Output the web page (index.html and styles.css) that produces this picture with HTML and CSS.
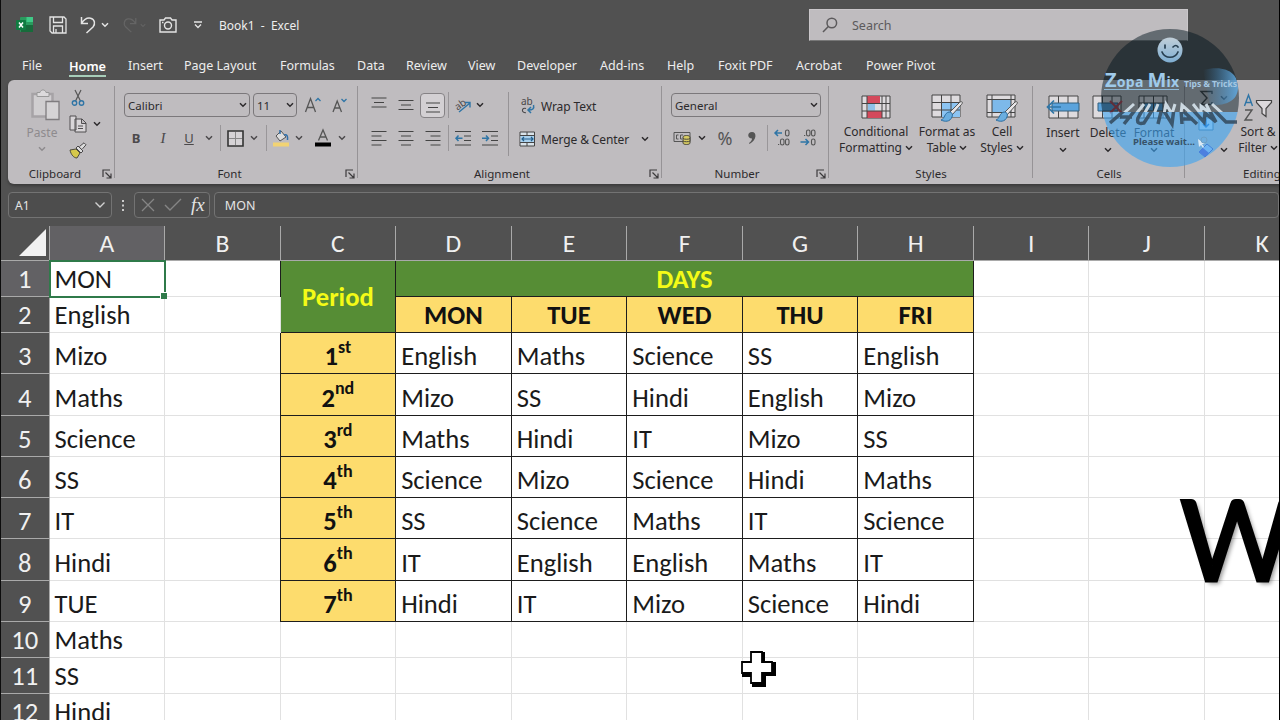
FILE: index.html
```html
<!DOCTYPE html>
<html lang="en">
<head>
<meta charset="utf-8">
<title>Book1 - Excel</title>
<link rel="stylesheet" href="styles.css">
</head>
<body>
<svg class="defs" width="0" height="0">
  <symbol id="chev" viewBox="0 0 8 6"><path d="M1 1.300 4 4.200 7 1.300" fill="none" stroke="currentColor" stroke-width="1.500"/></symbol>
  <symbol id="launch" viewBox="0 0 10 10"><path d="M1 8V1h7M3.500 3.500 8.500 8.500M9 4.500V9H4.500" fill="none" stroke="#3c3a3c" stroke-width="1.200"/></symbol>
</svg>
<div class="app">
  <header class="titlebar">
    <svg class="logo" width="18" height="18" viewBox="0 0 18 18"><rect x="4" y="1" width="13" height="15" rx="1" fill="#2a9b5e"/><path d="M10.500 1H17v5h-6.500z" fill="#3fca87"/><path d="M4 9h13v7H5z" fill="#176b3b"/><rect x="0" y="4" width="10" height="10" rx="1" fill="#107c41"/><path d="m3 6.500 4 5M7 6.500l-4 5" stroke="#fff" stroke-width="1.500"/></svg>
    <svg class="save" width="18" height="18" viewBox="0 0 18 18" fill="none" stroke="#e4e4e4" stroke-width="1.300"><path d="M1 1h14l2 2v14H3l-2-2zM4.500 1v5.500h9V1M4.500 17v-7h9v7M7 13v4"/></svg>
    <svg class="undo" width="16" height="18" viewBox="0 0 16 18" fill="none" stroke="#e4e4e4" stroke-width="1.500"><path d="M1.500 1v6.500H8M1.500 7.500C4 3.500 7 1.500 10.500 2.200c4.500 1 5 6 2.500 8.800L6.500 17"/></svg>
    <svg class="light" width="8" height="6"><use href="#chev"/></svg>
    <svg class="redo" width="16" height="16" viewBox="0 0 16 18" fill="none" stroke="#656565" stroke-width="1.400"><path d="M14.500 1v6.500H8M14.500 7.500C12 3.500 9 1.500 5.500 2.200c-4.500 1-5 6-2.500 8.800L9.500 17"/></svg>
    <svg class="dim" width="6" height="5"><use href="#chev"/></svg>
    <svg class="camera" width="18" height="16" viewBox="0 0 18 16" fill="none" stroke="#e4e4e4" stroke-width="1.400"><path d="M1 3h4l1.500-2h5L13 3h4v12H1z"/><circle cx="9" cy="8.500" r="3.500"/><path d="M3 5.500h1.500"/></svg>
    <svg class="more" width="8" height="8" viewBox="0 0 8 8" fill="none" stroke="#e4e4e4" stroke-width="1.300"><path d="M0 1h8M1 3.500 4 6.500 7 3.500"/></svg>
    <span class="doc">Book1&nbsp; -&nbsp; Excel</span>
    <div class="search"><svg width="16" height="16" viewBox="0 0 16 16" fill="none" stroke="#5c5a5c" stroke-width="1.500"><circle cx="9.800" cy="6" r="4.800"/><path d="M6.300 9.500 1 15"/></svg><span>Search</span></div>
  </header>
  <nav class="tabs">
    <a>File</a><a class="on">Home</a><a>Insert</a><a>Page Layout</a><a>Formulas</a><a>Data</a><a>Review</a><a>View</a><a>Developer</a><a>Add-ins</a><a>Help</a><a>Foxit PDF</a><a>Acrobat</a><a>Power Pivot</a>
  </nav>
  <section class="ribbon">
    <div class="group clipboard">
      <div class="body">
        <div class="paste">
          <svg width="32" height="34" viewBox="0 0 32 34"><path d="M3.500 6h20v22.500h-20z" fill="#d0ced0" stroke="#a6a3a6" stroke-width="2.500"/><path d="M8 8.500V4.500h3c1-3.500 5-3.500 6 0h3v4z" fill="#dcdadc" stroke="#999"/><path d="M17 13.500h13v18H17z" fill="#d5d3d5" stroke="#7f7c7f" stroke-width="1.300"/></svg>
          <span>Paste</span><svg width="8" height="6"><use href="#chev"/></svg>
        </div>
        <div class="clips">
          <svg width="14" height="18" viewBox="0 0 14 18" fill="none"><path d="m4 1 5.500 11M10 1 4.500 12" stroke="#555" stroke-width="1.200"/><circle cx="3.500" cy="14" r="2.200" stroke="#2f75a6" stroke-width="1.400"/><circle cx="10.500" cy="14" r="2.200" stroke="#2f75a6" stroke-width="1.400"/></svg><i></i>
          <svg width="18" height="18" viewBox="0 0 18 18" fill="#d8d5d8" stroke="#504e50"><path d="M1 1h6v14H1zM6 4h7l4 4v9H6zM12.500 4v4.500H17M9 11h5M9 13.500h5"/></svg><svg width="8" height="6"><use href="#chev"/></svg>
          <svg width="18" height="17" viewBox="0 0 18 17"><path d="m1 8 6-1 4 4-3 5c-3 0-6-3-7-8z" fill="#d6c84a" stroke="#4c4b3d"/><path d="m7 6 2-2 5 5-2 2zM10.500 4.500 15 .800l2 2-3.500 4" fill="#ddd" stroke="#4b494b"/></svg><i></i>
        </div>
      </div>
      <footer>Clipboard<svg class="launch" width="10" height="10"><use href="#launch"/></svg></footer>
    </div>
    <div class="group font">
      <div class="body">
        <div class="r1">
          <div class="combo">Calibri<svg width="8" height="6"><use href="#chev"/></svg></div>
          <div class="combo">11<svg width="8" height="6"><use href="#chev"/></svg></div>
          <svg width="16" height="16" viewBox="0 0 16 16" fill="none"><path d="M.500 15 5.500 1.500l5 13.500M2.300 10.500h6.500" stroke="#555" stroke-width="1.300"/><path d="m10.500 4 2.500-2.500L15.500 4" stroke="#2f75a6" stroke-width="1.300"/></svg>
          <svg width="16" height="16" viewBox="0 0 16 16" fill="none"><path d="M1 15 5.200 4l4.300 11M2.500 11H8" stroke="#555" stroke-width="1.300"/><path d="m9.500 2 2.500 2.500L14.500 2" stroke="#2f75a6" stroke-width="1.300"/></svg>
        </div>
        <div class="r2">
          <b>B</b><em>I</em><u>U</u><svg width="8" height="6"><use href="#chev"/></svg><s></s>
          <svg width="17" height="17" viewBox="0 0 17 17"><path d="M1 1h15v15H1z" fill="#d6d3d6" stroke="#333" stroke-width="1.600"/><path d="M8.500 2v13M2 8.500h13" stroke="#888"/></svg>
          <svg width="8" height="6"><use href="#chev"/></svg><s></s>
          <svg width="18" height="18" viewBox="0 0 18 18"><path d="m4 7 5-5 5 6-6 4z" fill="#ddd" stroke="#555"/><path d="M8 5V1M12 6c3-1 4 1 3.500 5" fill="none" stroke="#2f6faa" stroke-width="1.500"/><path d="M1 13.500h16v4H1z" fill="#f2d373"/></svg>
          <svg width="8" height="6"><use href="#chev"/></svg>
          <svg width="18" height="18" viewBox="0 0 18 18"><path d="M4.500 11.500 9 1l4.500 10.500M6 8h6" fill="none" stroke="#555" stroke-width="1.300"/><path d="M1 13.500h16v4H1z"/></svg>
          <svg width="8" height="6"><use href="#chev"/></svg>
        </div>
      </div>
      <footer>Font<svg class="launch" width="10" height="10"><use href="#launch"/></svg></footer>
    </div>
    <div class="group align">
      <div class="body">
        <div class="aligns">
          <div class="r1">
            <svg width="16" height="16" viewBox="0 0 16 16" stroke="#444" stroke-width="1.200"><path d="M.500 1h15M3 5.500h10M.500 10h15"/></svg>
            <svg width="16" height="16" viewBox="0 0 16 16" stroke="#444" stroke-width="1.200"><path d="M.500 3.500h15M3 8h10M.500 12.500h15"/></svg>
            <span class="pressed"><svg width="16" height="16" viewBox="0 0 16 16" stroke="#444" stroke-width="1.200"><path d="M1 6h14M3 10.500h10M1 15h14"/></svg></span><s></s>
            <svg width="18" height="18" viewBox="0 0 18 18"><text x="0" y="12" class="ab" transform="rotate(-35 6 8)">ab</text><path d="m5 16 11-9M11 6.500h5v5" fill="none" stroke="#2f75a6" stroke-width="1.400"/></svg>
            <svg width="8" height="6"><use href="#chev"/></svg>
          </div>
          <div class="r2">
            <svg width="16" height="16" viewBox="0 0 16 16" stroke="#444" stroke-width="1.200"><path d="M.500 1.500h15M.500 6h10M.500 10.500h15M.500 15h10"/></svg>
            <svg width="16" height="16" viewBox="0 0 16 16" stroke="#444" stroke-width="1.200"><path d="M.500 1.500h15M3 6h10M.500 10.500h15M3 15h10"/></svg>
            <svg width="16" height="16" viewBox="0 0 16 16" stroke="#444" stroke-width="1.200"><path d="M.500 1.500h15M5.500 6h10M.500 10.500h15M5.500 15h10"/></svg><s></s>
            <svg width="16" height="16" viewBox="0 0 16 16" fill="none" stroke="#444" stroke-width="1.200"><path d="M0 1.500h16M9 6h7M9 10.500h7M0 15h16"/><path d="M7.500 8.200H1M3.500 5.500 1 8.200 3.500 11" stroke="#2f75a6" stroke-width="1.500"/></svg>
            <svg width="16" height="16" viewBox="0 0 16 16" fill="none" stroke="#444" stroke-width="1.200"><path d="M0 1.500h16M9 6h7M9 10.500h7M0 15h16"/><path d="M0 8.200h6.500M4 5.500l2.500 2.700L4 11" stroke="#2f75a6" stroke-width="1.500"/></svg>
          </div>
        </div>
        <div class="wraps">
          <div><svg width="17" height="18" viewBox="0 0 17 18"><text x="2" y="8" class="ab">ab</text><path d="M7 11.500c-4-1.500-5.500 4.500 0 4.200" fill="none" stroke="#4a484a" stroke-width="1.100"/><path d="M14.500 8c1 4-1 5-5 5M12 10l-3 3 3 3" fill="none" stroke="#2f75a6" stroke-width="1.500"/></svg><span class="wt">Wrap Text</span></div>
          <div><svg width="17" height="16" viewBox="0 0 17 16"><path d="M1 1h14.500v14H1z" fill="#d9e3ea" stroke="#444"/><path d="M1 4.500h14.500M1 11.500h14.500M8 1v3.500M8 11.500V15" stroke="#444"/><path d="M1.500 5h13.500v6H1.500z" fill="#a9d1ee"/><path d="M3 8h11M5 6 3 8l2 2M12 6l2 2-2 2" fill="none" stroke="#235f8c" stroke-width="1.200"/></svg><span class="mc">Merge &amp; Center</span><svg width="8" height="6"><use href="#chev"/></svg></div>
        </div>
      </div>
      <footer>Alignment<svg class="launch" width="10" height="10"><use href="#launch"/></svg></footer>
    </div>
    <div class="group number">
      <div class="body">
        <div class="combo">General<svg width="8" height="6"><use href="#chev"/></svg></div>
        <div class="r2">
          <svg width="18" height="16" viewBox="0 0 18 16" fill="none" stroke="#555"><path d="M1 2.500h16v9H1z"/><path d="M5.500 5H3.500v4h2M10 5H7.500v4H9"/><path d="M10 7c0-2 7-2 7 0v6c0 2-7 2-7 0z" fill="#d8cc63" stroke="#49473c"/><path d="M10 8.500c1 1 6 1 7 0M10 11c1 1 6 1 7 0" stroke="#49473c"/></svg>
          <svg width="8" height="6"><use href="#chev"/></svg>
          <span class="pct">%</span>
          <svg width="10" height="14" viewBox="0 0 10 14"><path d="M5 1c5 0 5 8-2.500 12l-.5-1c2-1.500 3-3 3-4.500C0 7.500 0 1 5 1z" fill="#555"/></svg><s></s>
          <svg width="18" height="18" viewBox="0 0 18 18" fill="none" stroke="#555" stroke-width="1.100"><rect x="12.500" y="1" width="3.500" height="6" rx="1.700"/><rect x="7.500" y="10" width="3.500" height="6" rx="1.700"/><rect x="12.500" y="10" width="3.500" height="6" rx="1.700"/><path d="M5 15.500h1.200"/><path d="M9 4H2M5 1 2 4l3 3" stroke="#2f75a6" stroke-width="1.500"/></svg>
          <svg width="18" height="18" viewBox="0 0 18 18" fill="none" stroke="#555" stroke-width="1.100"><rect x="7.500" y="1" width="3.500" height="6" rx="1.700"/><rect x="12.500" y="1" width="3.500" height="6" rx="1.700"/><rect x="12.500" y="10" width="3.500" height="6" rx="1.700"/><path d="M5 6.500h1.200"/><path d="M1.500 13H9M6.500 10l3 3-3 3" stroke="#2f75a6" stroke-width="1.500"/></svg>
        </div>
      </div>
      <footer>Number<svg class="launch" width="10" height="10"><use href="#launch"/></svg></footer>
    </div>
    <div class="group styles">
      <div class="body">
        <div class="big"><svg width="30" height="26" viewBox="0 0 30 26"><path d="M1 1h28v22H1z" fill="#dedbde" stroke="#444"/><path d="M6 1h13v7H6zM6 16h15v7H6z" fill="#d4495b"/><path d="M7 8.500h7v7H7z" fill="#8fc0e8"/><path d="M6 1v22M21 1v22M25 1v22M1 8.500h28M1 16h28" fill="none" stroke="#444"/></svg><span>Conditional</span><span>Formatting <svg width="8" height="6"><use href="#chev"/></svg></span></div>
        <div class="big"><svg width="32" height="30" viewBox="0 0 32 30"><path d="M1 3h28v22H1z" fill="#dedbde" stroke="#444"/><path d="M10.500 10.500H29V25H10.500z" fill="#8cc4f2"/><path d="M10.500 3v22M20 3v22M1 10.500h28M1 18h28" stroke="#444"/><path d="M29 10c3-1 3 1 1 3l-9 10-3-2z" fill="#e7e5e7" stroke="#555"/><path d="M18 20c3 0 4 2 3 5-2 5-7 5-11 3 4-1 3-7 8-8z" fill="#6aaee0" stroke="#2c6d9f"/></svg><span>Format as</span><span>Table <svg width="8" height="6"><use href="#chev"/></svg></span></div>
        <div class="big"><svg width="32" height="30" viewBox="0 0 32 30"><path d="M1 3h28v22H1z" fill="#dedbde" stroke="#444"/><path d="M6 7.500h19v13H6z" fill="#7db9ea"/><path d="M6 3v22M25 3v22M1 7.500h28M1 20.500h28" stroke="#444"/><path d="M29 10c3-1 3 1 1 3l-9 10-3-2z" fill="#e7e5e7" stroke="#555"/><path d="M18 20c3 0 4 2 3 5-2 5-7 5-11 3 4-1 3-7 8-8z" fill="#6aaee0" stroke="#2c6d9f"/></svg><span>Cell</span><span>Styles <svg width="8" height="6"><use href="#chev"/></svg></span></div>
      </div>
      <footer>Styles</footer>
    </div>
    <div class="group cells">
      <div class="body">
        <div class="big"><svg width="34" height="26" viewBox="0 0 34 26"><path d="M3 1h29v22H3z" fill="#dedbde" stroke="#444"/><path d="M12.500 1v22M22 1v22" stroke="#444"/><path d="M6 8h27v8H6z" fill="#5ba3dc" stroke="#35617f"/><path d="M15 12H1.500M8 5.500 1.500 12 8 18.500" fill="none" stroke="#2f75a6" stroke-width="1.700"/></svg><span>Insert</span><svg width="8" height="6"><use href="#chev"/></svg></div>
        <div class="big"><svg width="32" height="26" viewBox="0 0 32 26"><path d="M1 1h28v22H1z" fill="#dedbde" stroke="#444"/><path d="M10.500 1v22M20 1v22" stroke="#444"/><path d="M6 8h20v8H6z" fill="#5ba3dc" stroke="#35617f"/><path d="m18 6 12 12M30 6 18 18" stroke="#b94752" stroke-width="2"/></svg><span>Delete</span><svg width="8" height="6"><use href="#chev"/></svg></div>
        <div class="big"><svg width="32" height="26" viewBox="0 0 32 26"><path d="M1 1h28v22H1z" fill="#dedbde" stroke="#444"/><path d="M6 8h19v8H6z" fill="#5ba3dc"/><path d="M6 1v22M25 1v22M15.500 1v22M1 8h28M1 16h28" stroke="#444"/></svg><span>Format</span><svg width="8" height="6"><use href="#chev"/></svg></div>
      </div>
      <footer>Cells</footer>
    </div>
    <div class="group editing">
      <div class="body">
        <div class="clips">
          <svg width="14" height="16" viewBox="0 0 14 16"><path d="M13 4V1.500H2L8 8l-6 6.500h11V12" fill="none" stroke="#444" stroke-width="1.400"/></svg><svg width="8" height="6"><use href="#chev"/></svg>
          <svg width="16" height="16" viewBox="0 0 16 16"><path d="M1 2h14v12H1z" fill="#c6dcf0" stroke="#4c7797"/><path d="M8 3v8M5 8l3 3 3-3" fill="none" stroke="#2f75c6" stroke-width="1.500"/></svg><i></i>
          <svg width="16" height="16" viewBox="0 0 16 16"><path d="m1 10 8-8 6 5-8 8z" fill="#b9cdf6" stroke="#534fae"/><path d="m1 10 4-4 6 5-4 4z" fill="#6a4cc4"/></svg><svg width="8" height="6"><use href="#chev"/></svg>
        </div>
        <div class="big"><svg width="30" height="28" viewBox="0 0 30 28" fill="none"><path d="M1.500 12 5.500 1l4 11M3 8.500h5.500" stroke="#2f75a6" stroke-width="1.400"/><path d="M2 16h7L2 26h7.500" stroke="#555" stroke-width="1.400"/><path d="M13.500 6.500h15v2l-5.500 6v8l-4-3v-5l-5.500-6z" fill="#dcd9dc" stroke="#444" stroke-width="1.200"/></svg><span>Sort &amp;</span><span>Filter <svg width="8" height="6"><use href="#chev"/></svg></span></div>
      </div>
      <footer>Editing</footer>
    </div>
  </section>
  <section class="formula">
    <div class="name">A1<svg width="12" height="8" viewBox="0 0 12 8"><path d="m1.500 1.500 4.500 4.500 4.500-4.500" fill="none" stroke="#d0d0d0" stroke-width="1.400"/></svg></div>
    <svg class="dots" width="4" height="14" viewBox="0 0 4 14" fill="#ccc"><path d="M1 1h2v2H1zM1 5.500h2v2H1zM1 10h2v2H1z"/></svg>
    <div class="fx"><svg width="14" height="14" viewBox="0 0 14 14"><path d="m1 1 12 12M13 1 1 13" stroke="#858585" stroke-width="1.300"/></svg><svg width="18" height="14" viewBox="0 0 18 14"><path d="m1 7 5 5L17 1" fill="none" stroke="#858585" stroke-width="1.400"/></svg><i>fx</i></div>
    <div class="input">MON</div>
  </section>
  <main class="sheet">
    <div class="h corner"><svg width="28" height="28"><path d="M27 0v27H0z" fill="#f1f1f1"/></svg></div><div class="h sel">A</div><div class="h">B</div><div class="h">C</div><div class="h">D</div><div class="h">E</div><div class="h">F</div><div class="h">G</div><div class="h">H</div><div class="h">I</div><div class="h">J</div><div class="h">K</div>
    <div class="n sel">1</div><div class="active">MON</div><div></div><div class="t p green">Period</div><div class="t green days">DAYS</div><div></div><div></div><div></div>
    <div class="n">2</div><div>English</div><div></div><div class="t y">MON</div><div class="t y">TUE</div><div class="t y">WED</div><div class="t y">THU</div><div class="t y">FRI</div><div></div><div></div><div></div>
    <div class="n">3</div><div>Mizo</div><div></div><div class="t y p">1<sup>st</sup></div><div class="t">English</div><div class="t">Maths</div><div class="t">Science</div><div class="t">SS</div><div class="t">English</div><div></div><div></div><div></div>
    <div class="n">4</div><div>Maths</div><div></div><div class="t y p">2<sup>nd</sup></div><div class="t">Mizo</div><div class="t">SS</div><div class="t">Hindi</div><div class="t">English</div><div class="t">Mizo</div><div></div><div></div><div></div>
    <div class="n">5</div><div>Science</div><div></div><div class="t y p">3<sup>rd</sup></div><div class="t">Maths</div><div class="t">Hindi</div><div class="t">IT</div><div class="t">Mizo</div><div class="t">SS</div><div></div><div></div><div></div>
    <div class="n">6</div><div>SS</div><div></div><div class="t y p">4<sup>th</sup></div><div class="t">Science</div><div class="t">Mizo</div><div class="t">Science</div><div class="t">Hindi</div><div class="t">Maths</div><div></div><div></div><div></div>
    <div class="n">7</div><div>IT</div><div></div><div class="t y p">5<sup>th</sup></div><div class="t">SS</div><div class="t">Science</div><div class="t">Maths</div><div class="t">IT</div><div class="t">Science</div><div></div><div></div><div></div>
    <div class="n">8</div><div>Hindi</div><div></div><div class="t y p">6<sup>th</sup></div><div class="t">IT</div><div class="t">English</div><div class="t">English</div><div class="t">Maths</div><div class="t">IT</div><div></div><div></div><div></div>
    <div class="n">9</div><div>TUE</div><div></div><div class="t y p">7<sup>th</sup></div><div class="t">Hindi</div><div class="t">IT</div><div class="t">Mizo</div><div class="t">Science</div><div class="t">Hindi</div><div></div><div></div><div></div>
    <div class="n">10</div><div>Maths</div><div></div><div></div><div></div><div></div><div></div><div></div><div></div><div></div><div></div><div></div>
    <div class="n">11</div><div>SS</div><div></div><div></div><div></div><div></div><div></div><div></div><div></div><div></div><div></div><div></div>
    <div class="n">12</div><div>Hindi</div><div></div><div></div><div></div><div></div><div></div><div></div><div></div><div></div><div></div><div></div>
  </main>
  <div class="caption">W</div>
  <svg class="cursor" width="38" height="38" viewBox="0 0 38 38"><path d="M12 3h12v10h11v12H25v11H13V26H3V14h9z" fill="#000" stroke="#000" stroke-width="2"/><path d="M11 2h11v10h10v11H22v10H11V23H2V12h9z" fill="#fff" stroke="#000" stroke-width="1.800"/></svg>
  <svg class="badge" width="140" height="140" viewBox="0 0 140 140">
    <defs><clipPath id="disc"><circle cx="70" cy="69" r="69"/></clipPath>
    <clipPath id="upper"><path d="M0 0h140v83H0z"/></clipPath>
    <clipPath id="lower"><path d="M0 83h140v57H0z"/></clipPath>
    <linearGradient id="glow"><stop offset="0" stop-color="#3a82bb" stop-opacity="0"/><stop offset="1" stop-color="#61a9df" stop-opacity=".9"/></linearGradient>
    <linearGradient id="face" x2="0" y2="1"><stop offset="0" stop-color="#c1cfd9"/><stop offset="1" stop-color="#7faed2"/></linearGradient></defs>
    <g clip-path="url(#disc)">
      <path d="M0 0h140v83H0z" fill="#00121e" fill-opacity=".48"/>
      <path d="M0 83h140v57H0z" fill="#3aa3f2" fill-opacity=".6"/>
      <path d="M103 41c25-6 35 5 35 17s-9 19-28 18z" fill="url(#glow)"/>
    </g>
    <circle cx="70" cy="21" r="12.500" fill="url(#face)"/>
    <path d="M62 23c3 7 13 7 16 0M65 16v3M73 18q3-3 5 0" fill="none" stroke="#263e50" stroke-width="1.700" stroke-linecap="round"/>
    <text class="brand" x="5" y="58" textLength="74"><tspan class="cap">Z</tspan>opa <tspan class="cap">M</tspan>ix</text>
    <path d="M4 60.500h75" stroke="#8fbbd9"/>
    <text class="tips" x="84" y="58" textLength="53" lengthAdjust="spacingAndGlyphs">Tips &amp; Tricks</text>
    <g clip-path="url(#lower)" fill="none" stroke="#33485a" stroke-width="3.500" stroke-opacity=".85"><path d="m26 80-16 14M36 80 24 95M20 88h12M43 80l-5 9q-2 7 6 5l9-14M58 95l4-16 10 16 2-16M82 95l-1-15 16 15M83 90h10M92 80l12 13 1-9 11 9-8-14M113 80l13 13h11"/></g>
    <g clip-path="url(#upper)" fill="none" stroke="#cbd8e1" stroke-width="3"><path d="m34 75-11 10M44 75l-8 10M50 75l-6 10M58 75l-4 10M64 85l2-10 6 10 3-10M81 85l1-9 10 9M93 75l8 10 0-8 10 8-5-10M112 75l11 10"/></g>
    <text class="wait" x="33" y="116" textLength="62" lengthAdjust="spacingAndGlyphs">Please wait...</text>
    <path d="m98 110 1 8 2-2 2 3 1-1-2-3h3z" fill="#dceaf5"/><circle cx="104" cy="111" r="3" fill="none" stroke="#6d9fc5"/>
  </svg>
</div>
</body>
</html>
```
FILE: styles.css
```css
* { box-sizing: border-box; }
body { margin: 0; width: 1280px; height: 720px; overflow: hidden; font-family: "Noto Sans", "Open Sans", sans-serif; font-size: 12px; color: #2c2a2c; background: #000; }
svg { display: block; flex: none; overflow: visible; }
.defs { position: absolute; }
s { width: 1px; height: 26px; background: #999699; }
.app { position: relative; width: 1280px; height: 720px; overflow: hidden; background: #515151; border-left: 1px solid #0c0c0c; border-right: 1px solid #000; }

.titlebar { height: 49px; display: flex; align-items: center; padding: 1px 0 0 15px; color: #eee; }
.save { margin-left: 15px; }
.undo { margin-left: 13px; }
.light { color: #e4e4e4; margin-left: 5px; }
.redo { margin-left: 13px; }
.dim { color: #626262; margin-left: 2px; }
.camera { margin-left: 13px; }
.more { margin-left: 17px; }
.doc { margin-left: 17px; width: 590px; white-space: nowrap; }
.search { width: 379px; height: 32px; background: #bfbcbf; border: 1px solid #cac7ca; border-bottom: 1px solid #777; display: flex; align-items: center; padding-left: 12px; gap: 14px; color: #5c5a5c; font-size: 12.500px; }

.tabs { height: 31px; padding-left: 21px; display: grid; grid-template-columns: 47px 59px 56px 96px 77px 49px 62px 49px 83px 67px 51px 78px 70px 80px; color: #ededed; font-size: 12.500px; line-height: 34px; white-space: nowrap; }
.tabs a { justify-self: start; height: 29px; }
.tabs .on { font-weight: 600; color: #fff; height: 28px; border-bottom: 2px solid #a7cdb9; font-size: 12.700px; }

.ribbon { width: 1290px; height: 104px; margin-left: 7px; background: #bfbcbf; border-radius: 6px 0 0 6px; display: flex; box-shadow: 0 2px 3px #3b3b3b; }
.group { height: 104px; flex: none; display: flex; flex-direction: column; position: relative; }
.group + .group::before { content: ""; position: absolute; left: -1px; top: 6px; height: 92px; width: 1px; background: #969396; }
.body { height: 84px; display: flex; }
.group footer { height: 18px; line-height: 19px; font-size: 11.500px; text-align: center; position: relative; }
.launch { position: absolute; right: 3px; top: 5px; }
.combo { height: 24px; border: 1px solid #7b787b; border-radius: 4px; display: flex; align-items: center; justify-content: space-between; padding: 0 2px 0 3px; font-size: 11.500px; }
.r1, .r2 { display: grid; place-items: center; height: 26px; }

.clipboard { width: 107px; }
.clipboard footer { padding-right: 13px; }
.paste { width: 58px; padding: 8px 0 0 10px; display: flex; flex-direction: column; align-items: center; color: #8e8b8e; }
.paste > svg:first-child { margin-left: 5px; }
.paste span { line-height: 18px; margin: 2px 0 4px; }
.clips { display: grid; grid-template-columns: 24px 14px; grid-template-rows: 26px 26px 26px; place-items: center; padding-top: 5px; }
.font { width: 243px; }
.font .body { flex-direction: column; padding: 12px 0 0 9px; gap: 7px; }
.font .r1 { grid-template-columns: 129px 44px 31px 23px; }
.font .r1 .combo { justify-self: stretch; }
.font .r1 .combo:first-child { margin-right: 3px; }
.font .r2 { grid-template-columns: 24px 30px 22px 18px 4px 26px 12px 12px 18px 18px 30px 8px; font-size: 13px; color: #4b494b; }
.font .r2 em { font-family: "Liberation Serif", serif; font-size: 15px; }
.font footer { padding-right: 14px; }

.align { width: 304px; }
.aligns { width: 151px; margin-top: 12px; padding: 0 0 0 8px; display: grid; grid-template-rows: 26px 26px; gap: 7px; border-right: 1px solid #969396; height: 64px; }
.aligns .r1 { grid-template-columns: 26px 28px 25px 6px 24px 10px; justify-content: start; }
.aligns .r2 { grid-template-columns: 26px 28px 25px 6px 24px 30px; justify-content: start; }
.pressed { width: 25px; height: 25px; border: 1px solid #858285; border-radius: 4px; background: #d3d0d3; display: grid; place-items: center; }
.ab { font: 10px "Noto Sans", sans-serif; fill: #4a484a; }
.wraps { padding: 13px 0 0 10px; display: grid; grid-template-rows: 26px 26px; gap: 7px; }
.wraps div { display: flex; align-items: center; }
.wraps span { margin-left: 5px; white-space: nowrap; }
.wraps .wt { letter-spacing: -.1px; }
.wraps .mc { width: 100px; letter-spacing: -.1px; }
.align footer { padding-right: 16px; }

.number { width: 167px; }
.number .body { flex-direction: column; padding: 13px 8px 0 9px; gap: 8px; }
.number .r2 { grid-template-columns: 22px 18px 28px 26px 4px 26px 26px; }
.pct { font-size: 18px; color: #555; line-height: 20px; }
.number footer { padding-right: 17px; }

.big { display: flex; flex-direction: column; align-items: center; white-space: nowrap; padding-top: 12px; }
.big > svg:first-child { height: 32px; }
.big span { line-height: 16px; display: flex; align-items: center; gap: 3px; }
.styles { width: 204px; }
.styles .body { display: grid; grid-template-columns: 76px 66px 44px; padding-left: 9px; }
.styles .big:nth-child(n+2) { padding-top: 10px; }
.styles .big:nth-child(n+2) > svg:first-child { height: 34px; }
.cells { width: 152px; }
.cells .body { display: grid; grid-template-columns: 46px 44px 48px; padding-left: 7px; }
.cells .big span { margin-bottom: 5px; line-height: 18px; }
.editing { width: 105px; }
.editing .body .clips { padding-left: 9px; grid-template-columns: 24px 12px; }
.editing .big { width: 56px; margin-left: 0; }
.editing footer { text-align: left; padding-left: 58px; }

.formula { height: 42px; padding: 8px 0 0 7px; display: flex; color: #e4e4e4; }
.formula > div { height: 26px; border: 1px solid #737373; border-radius: 4px; display: flex; align-items: center; background: #4d4d4d; }
.name { width: 105px; justify-content: space-between; padding: 0 5px 0 6px; }
.dots { margin: 7px 8px 0 9px; }
.formula > .fx { width: 77px; margin-left: 1px; justify-content: space-between; padding: 0 4px 0 6px; }
.fx i { font: italic 19px "Liberation Serif", serif; line-height: 20px; }
.formula > .input { width: 1080px; margin-left: 4px; padding-left: 10px; font-size: 12.500px; }

.sheet { display: grid; width: 1322px; grid-template-columns: 48.500px repeat(11, 115.550px); grid-template-rows: 35px 36px 36px repeat(7, 41.250px) 36px 36px 36px; background: #fff; color: #1a1a1a; font-family: Carlito, Lato, sans-serif; font-size: 26.600px; line-height: 30px; }
.sheet > div { border-right: 1px solid #e1e1e1; border-bottom: 1px solid #e1e1e1; padding-left: 5px; display: flex; align-items: flex-end; padding-bottom: 2px; white-space: nowrap; min-width: 0; }
.sheet > .h, .sheet > .n { background: #515151; color: #f0f0f0; border-color: #a9a9a9; justify-content: center; padding-left: 0; }
.sheet > .sel { background: #626164; }
.sheet > .h { font-size: 25.500px; padding-bottom: 1px; }
.sheet > .corner { justify-content: flex-end; align-items: flex-end; padding: 0 2px 3px 0; }
.sheet > .active { outline: 2px solid #2f7a4a; outline-offset: -1px; position: relative; }
.active::after { content: ""; position: absolute; right: -3px; bottom: -3px; width: 6px; height: 6px; background: #2f7a4a; border: 1px solid #fff; border-width: 1px 0 0 1px; }
.sheet > .t { border-color: #1d1d1d; }
.sheet > .y, .sheet > .green { background: #fddc6d; justify-content: center; font-weight: 700; padding-left: 0; color: #111; }
.sheet > .green { background: #568d35; color: #f4fb17; align-items: center; padding-bottom: 0; }
.sheet > .p { margin-left: -1px; border-left: 1px solid #1d1d1d; }
.sheet > .green.p { grid-row: 2 / span 2; grid-column: 4; }
.sheet > .days { grid-column: span 5; }
.sheet sup { font-size: 18px; line-height: 18px; align-self: flex-start; margin-top: 5px; }

.caption { position: absolute; left: 1180px; top: 460px; font: 126px/156px Carlito, Lato, sans-serif; color: #000; -webkit-text-stroke: 3px #000; text-shadow: 3px 3px 4px #0006; }
.cursor { position: absolute; left: 739px; top: 650px; }
.badge { position: absolute; left: 1099px; top: 29px; }
.brand { font: 700 14px "Noto Sans", sans-serif; fill: #9fcaea; }
.cap { font-size: 20px; }
.tips { font: 700 8px "Noto Sans", sans-serif; fill: #a5c8e2; }
.wait { font: 700 9px "Noto Sans", sans-serif; fill: #37536a; }
```
